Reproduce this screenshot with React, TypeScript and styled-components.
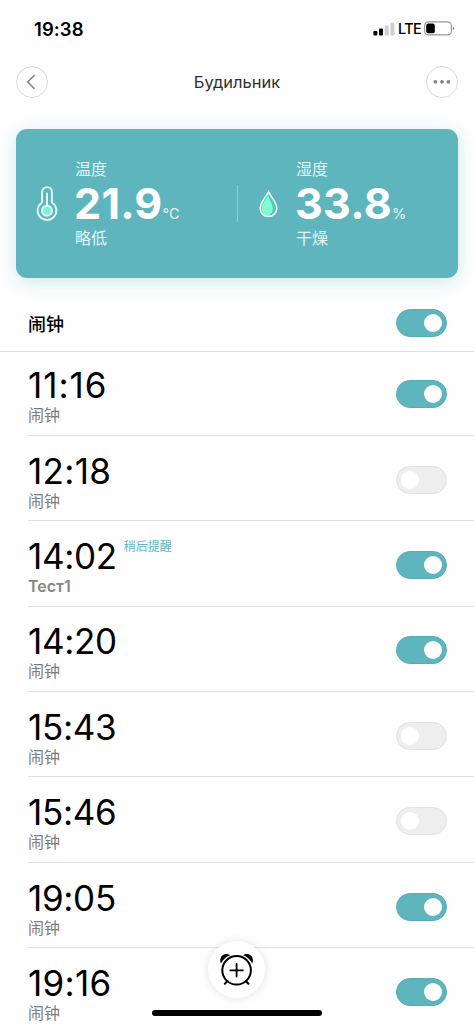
import React from "react";
import styled, { createGlobalStyle } from "styled-components";

const GlobalStyle = createGlobalStyle`
  * { box-sizing: border-box; }
  html, body { margin: 0; padding: 0; overflow: hidden; }
  body {
    background: #fefefe;
    color: #000;
    font-family: Inter, "Noto Sans CJK SC", sans-serif;
  }
`;

const Screen = styled.div`
  position: relative;
  width: 474px;
  height: 1025px;
  overflow: hidden;
  display: flex;
  flex-direction: column;
`;

const StatusBar = styled.header`
  display: flex;
  align-items: center;
  justify-content: space-between;
  height: 57px;
  flex: none;
  padding: 0 19px 0 34px;
`;

const Clock = styled.span`
  font-size: 18.5px;
  font-weight: 600;
  line-height: 24px;
  letter-spacing: 0.1px;
`;

const StatusIcons = styled.div`
  display: flex;
  align-items: center;
  height: 24px;
`;

const Network = styled.span`
  font-size: 14.5px;
  font-weight: 500;
  letter-spacing: -0.65px;
  width: 23px;
  margin: 0 3px 0 3px;
`;

const NavBar = styled.nav`
  display: flex;
  align-items: center;
  justify-content: space-between;
  height: 50px;
  flex: none;
  padding: 0 16px;
`;

const RoundButton = styled.button`
  width: 32px;
  height: 32px;
  padding: 0;
  border: 1px solid #d9d9d9;
  border-radius: 50%;
  background: #fff;
  display: flex;
  align-items: center;
  justify-content: center;
`;

const Title = styled.h1`
  margin: 0;
  font-size: 16.5px;
  font-weight: 400;
  line-height: 24px;
  color: #303030;
`;

const Card = styled.section`
  display: flex;
  align-items: center;
  flex: none;
  height: 149px;
  margin: 22px 16px 0;
  border-radius: 11px;
  background: #5eb5be;
  color: #fff;
  box-shadow: 0 4px 18px rgba(94, 181, 190, 0.3);
`;

const Divider = styled.div`
  width: 1px;
  height: 37px;
  background: #92cdd3;
`;

const Metric = styled.div<{ $width: number; $indent: number; $gap: number }>`
  display: flex;
  align-items: center;
  width: ${(p) => p.$width}px;
  padding-left: ${(p) => p.$indent}px;
  gap: ${(p) => p.$gap}px;
`;

const MetricText = styled.div`
  display: flex;
  flex-direction: column;
`;

const MetricLabel = styled.span`
  font-size: 16px;
  line-height: 24px;
  color: #e3f5f6;
`;

const MetricValue = styled.div`
  display: flex;
  align-items: baseline;
  height: 45px;
  line-height: 45px;
  white-space: nowrap;
`;

const Reading = styled.span`
  font-size: 43px;
  font-weight: 700;
  letter-spacing: 0.3px;
  margin-left: -1px;
`;

const Unit = styled.span`
  font-size: 14.5px;
  color: #e3f5f6;
`;

const Master = styled.section`
  display: flex;
  align-items: center;
  justify-content: space-between;
  flex: none;
  height: 74px;
  padding: 16px 27px 0 28px;
  border-bottom: 1px solid #dedede;
  font-size: 18px;
  font-weight: 500;
`;

const AlarmList = styled.ul`
  list-style: none;
  margin: -1.5px 0 0;
  padding: 0 0 0 28px;
`;

const AlarmItem = styled.li`
  display: flex;
  align-items: center;
  justify-content: space-between;
  height: 85.4px;
  padding: 3px 27px 0 0;
  border-bottom: 1px solid #dfdfdf;
`;

const AlarmInfo = styled.div`
  display: flex;
  flex-direction: column;
  padding-top: 2px;
`;

const TimeLine = styled.div`
  display: flex;
  align-items: flex-start;
  gap: 7px;
`;

const Time = styled.span<{ $spacing: number }>`
  font-size: 35px;
  line-height: 40px;
  letter-spacing: ${(p) => p.$spacing}px;
`;

const Snooze = styled.span`
  font-size: 12px;
  line-height: 16px;
  margin-top: 3px;
  color: #65b6c0;
`;

const AlarmLabel = styled.span<{ $bold?: boolean }>`
  font-size: 16px;
  line-height: 20px;
  font-weight: ${(p) => (p.$bold ? 600 : 400)};
  color: ${(p) => (p.$bold ? "#868686" : "#7c7c7c")};
`;

const Track = styled.button<{ $on: boolean }>`
  display: flex;
  align-items: center;
  justify-content: ${(p) => (p.$on ? "flex-end" : "flex-start")};
  flex: none;
  width: 51px;
  height: 28px;
  padding: 0 4px;
  border-radius: 14px;
  border: 1px solid ${(p) => (p.$on ? "#58aeb5" : "#e3e3e3")};
  background: ${(p) => (p.$on ? "#5eb5be" : "#eeeeee")};
`;

const Knob = styled.span`
  width: 18px;
  height: 18px;
  border-radius: 50%;
  background: #fff;
`;

const AddButton = styled.button`
  position: absolute;
  left: 208px;
  top: 941px;
  width: 57px;
  height: 57px;
  padding: 0;
  border: 0;
  border-radius: 50%;
  background: #fff;
  box-shadow: 0 0 9px rgba(0, 0, 0, 0.11);
  display: flex;
  align-items: center;
  justify-content: center;
`;

const HomeIndicator = styled.div`
  position: absolute;
  left: 152px;
  top: 1010px;
  width: 170px;
  height: 6px;
  border-radius: 3px;
  background: #000;
`;

function SignalIcon() {
  return (
    <svg width="22" height="14" viewBox="0 0 22 14">
      <rect x="0.4" y="9" width="4" height="4.5" rx="1" />
      <rect x="6" y="6.5" width="4" height="7" rx="1" />
      <rect x="11.7" y="3.5" width="4" height="10" rx="1" fill="#cfcfcf" />
      <rect x="17.4" y="0.8" width="4" height="12.7" rx="1" fill="#cfcfcf" />
    </svg>
  );
}

function BatteryIcon() {
  return (
    <svg width="31" height="15" viewBox="0 0 31 15">
      <rect x="0.6" y="0.9" width="26.8" height="13" rx="3.8" fill="none" stroke="#979797" strokeWidth="1.1" />
      <rect x="2.2" y="2.5" width="8.6" height="9.8" rx="2" />
      <path d="M28.8 5.6 Q30.2 6.2 30.2 7.4 Q30.2 8.6 28.8 9.2 Z" fill="#858585" />
    </svg>
  );
}

function BackIcon() {
  return (
    <svg width="30" height="30" viewBox="0 0 30 30" fill="none" stroke="#8c8c8c" strokeWidth="1.7">
      <path d="M17.6 8.1 L10.7 15 L17.6 21.9" />
    </svg>
  );
}

function MoreIcon() {
  return (
    <svg width="30" height="30" viewBox="0 0 30 30" fill="#858585">
      <circle cx="8.4" cy="14.8" r="1.9" />
      <circle cx="15" cy="14.8" r="1.9" />
      <circle cx="21.4" cy="14.8" r="1.9" />
    </svg>
  );
}

function ThermometerIcon() {
  return (
    <svg width="22" height="36" viewBox="0 0 22 36" fill="none" stroke="#e2fafa">
      <path
        d="M6.1 16.5 V6 A4.9 4.9 0 0 1 15.9 6 V16.5 A9.4 9.4 0 1 1 6.1 16.5 Z"
        strokeWidth="1.9"
      />
      <circle cx="11" cy="24.7" r="5" strokeWidth="2" fill="#7cf3d3" />
      <path d="M11 7.6 V19.5" strokeWidth="2" strokeLinecap="round" />
    </svg>
  );
}

function DropIcon() {
  return (
    <svg width="19" height="28" viewBox="0 0 19 28">
      <path
        d="M9.5 1.8 C7.2 6.8 1.2 12.2 1.2 18.3 A8.3 8.1 0 0 0 17.8 18.3 C17.8 12.2 11.8 6.8 9.5 1.8 Z"
        fill="#4cc7b6"
        stroke="#eafcfc"
        strokeWidth="1.7"
      />
      <path d="M9.2 5 C7.8 9 2.7 13 2.7 18.6 C2.7 22.6 5.5 25.2 8.6 25.2 C11.8 25.2 13.8 22.4 13.8 19 C13.8 14 10.2 9.5 9.2 5 Z" fill="#7ffbd9" />
    </svg>
  );
}

function AlarmAddIcon() {
  return (
    <svg width="36" height="34" viewBox="0 0 36 34" fill="none" stroke="#000">
      <circle cx="17.6" cy="17.3" r="14.3" strokeWidth="2" />
      <path d="M17.6 11 V23.6 M11.3 17.3 H23.9" strokeWidth="1.8" strokeLinecap="round" />
      <path d="M8.4 28 L5.8 30.8 M26.8 28 L29.4 30.8" strokeWidth="2" strokeLinecap="round" />
      <path d="M1.9 10.6 C0 5.6 2.6 1.2 7 1 C8.8 0.9 10.2 1.5 11 2.3 C7.2 3.8 3.9 6.4 1.9 10.6 Z" fill="#000" stroke="none" />
      <path d="M33.3 10.6 C35.2 5.6 32.6 1.2 28.2 1 C26.4 0.9 25 1.5 24.2 2.3 C28 3.8 31.3 6.4 33.3 10.6 Z" fill="#000" stroke="none" />
    </svg>
  );
}

function Toggle({ on }: { on: boolean }) {
  return (
    <Track $on={on} role="switch" aria-checked={on}>
      <Knob />
    </Track>
  );
}

interface Alarm {
  time: string;
  label: string;
  on: boolean;
  bold?: boolean;
  snooze?: string;
}

const alarms: Alarm[] = [
  { time: "11:16", label: "闹钟", on: true },
  { time: "12:18", label: "闹钟", on: false },
  { time: "14:02", label: "Тест1", on: true, bold: true, snooze: "稍后提醒" },
  { time: "14:20", label: "闹钟", on: true },
  { time: "15:43", label: "闹钟", on: false },
  { time: "15:46", label: "闹钟", on: false },
  { time: "19:05", label: "闹钟", on: true },
  { time: "19:16", label: "闹钟", on: true },
];

// The digit 1 is narrow, so times that repeat it are tracked out a little.
function timeSpacing(time: string) {
  const ones = time.split("1").length - 1;
  return -0.3 + (ones - 1) * 0.64;
}

export default function App() {
  return (
    <Screen>
      <GlobalStyle />
      <StatusBar>
        <Clock>19:38</Clock>
        <StatusIcons>
          <SignalIcon />
          <Network>LTE</Network>
          <BatteryIcon />
        </StatusIcons>
      </StatusBar>
      <NavBar>
        <RoundButton aria-label="Назад"><BackIcon /></RoundButton>
        <Title>Будильник</Title>
        <RoundButton aria-label="Ещё"><MoreIcon /></RoundButton>
      </NavBar>
      <Card>
        <Metric $width={221} $indent={20} $gap={17}>
          <ThermometerIcon />
          <MetricText>
            <MetricLabel>温度</MetricLabel>
            <MetricValue>
              <Reading>21.9</Reading>
              <Unit>°C</Unit>
            </MetricValue>
            <MetricLabel>略低</MetricLabel>
          </MetricText>
        </Metric>
        <Divider />
        <Metric $width={220} $indent={21} $gap={18}>
          <DropIcon />
          <MetricText>
            <MetricLabel>湿度</MetricLabel>
            <MetricValue>
              <Reading>33.8</Reading>
              <Unit>%</Unit>
            </MetricValue>
            <MetricLabel>干燥</MetricLabel>
          </MetricText>
        </Metric>
      </Card>
      <Master>
        <span>闹钟</span>
        <Toggle on />
      </Master>
      <AlarmList>
        {alarms.map((alarm) => (
          <AlarmItem key={alarm.time}>
            <AlarmInfo>
              <TimeLine>
                <Time $spacing={timeSpacing(alarm.time)}>{alarm.time}</Time>
                {alarm.snooze && <Snooze>{alarm.snooze}</Snooze>}
              </TimeLine>
              <AlarmLabel $bold={alarm.bold}>{alarm.label}</AlarmLabel>
            </AlarmInfo>
            <Toggle on={alarm.on} />
          </AlarmItem>
        ))}
      </AlarmList>
      <AddButton aria-label="Добавить"><AlarmAddIcon /></AddButton>
      <HomeIndicator />
    </Screen>
  );
}
